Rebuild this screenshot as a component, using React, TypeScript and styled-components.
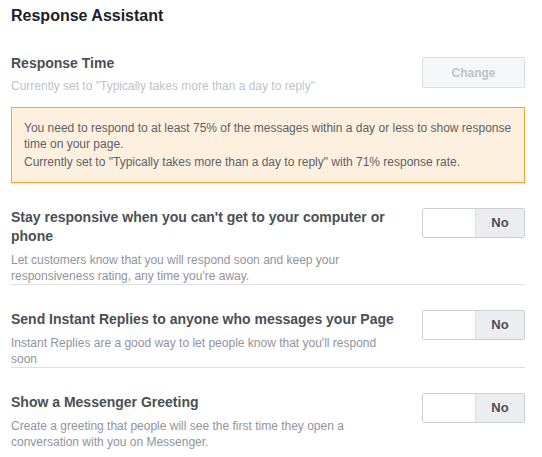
import React, {useState} from 'react';
import styled, {createGlobalStyle} from 'styled-components';

const GlobalStyle = createGlobalStyle`
  html, body {
    margin: 0;
    padding: 0;
    background: #fff;
    font-family: "Liberation Sans", Arial, Helvetica, sans-serif;
    -webkit-font-smoothing: antialiased;
  }
`;

type SettingRowProps = {
  title: string;
  description: string;
  last?: boolean;
};

const settings: SettingRowProps[] = [
  {
    title: "Stay responsive when you can't get to your computer or phone",
    description:
      "Let customers know that you will respond soon and keep your responsiveness rating, any time you're away.",
  },
  {
    title: 'Send Instant Replies to anyone who messages your Page',
    description: "Instant Replies are a good way to let people know that you'll respond soon",
  },
  {
    title: 'Show a Messenger Greeting',
    description:
      'Create a greeting that people will see the first time they open a conversation with you on Messenger.',
    last: true,
  },
];

function SettingRow({title, description, last}: SettingRowProps) {
  const [enabled, setEnabled] = useState(false);

  return (
    <Row $last={last}>
      <TextColumn>
        <RowTitle>{title}</RowTitle>
        <RowDescription>{description}</RowDescription>
      </TextColumn>
      <Toggle type="button" onClick={() => setEnabled(!enabled)}>
        <ToggleKnob $on={enabled}>{enabled ? 'Yes' : ''}</ToggleKnob>
        <ToggleLabel $on={enabled}>{enabled ? '' : 'No'}</ToggleLabel>
      </Toggle>
    </Row>
  );
}

export default function App() {
  return (
    <>
      <GlobalStyle />
      <Page>
        <Header>Response Assistant</Header>
        <ResponseTimeRow>
          <div>
            <SectionTitle>Response Time</SectionTitle>
            <Subtitle>Currently set to "Typically takes more than a day to reply"</Subtitle>
          </div>
          <ChangeButton type="button" disabled>
            Change
          </ChangeButton>
        </ResponseTimeRow>
        <Notice>
          <NoticeText>
            You need to respond to at least 75% of the messages within a day or less to show
            response time on your page.
          </NoticeText>
          <NoticeText>
            Currently set to "Typically takes more than a day to reply" with 71% response rate.
          </NoticeText>
        </Notice>
        {settings.map((s) => (
          <SettingRow key={s.title} {...s} />
        ))}
      </Page>
    </>
  );
}

const Page = styled.div`
  width: 542px;
  box-sizing: border-box;
  padding: 6px 17px 0 11px;
`;

const Header = styled.div`
  font-size: 16px;
  line-height: 20px;
  font-weight: bold;
  color: #1d2129;
`;

const ResponseTimeRow = styled.div`
  display: flex;
  justify-content: space-between;
  align-items: flex-start;
  margin-top: 28px;
`;

const SectionTitle = styled.div`
  font-size: 14px;
  line-height: 18px;
  font-weight: bold;
  color: #4b4f56;
`;

const Subtitle = styled.div`
  margin-top: 6px;
  font-size: 12px;
  line-height: 16px;
  color: #bec3c9;
`;

const ChangeButton = styled.button`
  margin-top: 3px;
  width: 103px;
  height: 31px;
  box-sizing: border-box;
  border: 1px solid #dddfe2;
  border-radius: 2px;
  background: #f5f6f7;
  color: #bec3c9;
  font-family: inherit;
  font-size: 12px;
  font-weight: bold;
  padding: 0;
`;

const Notice = styled.div`
  margin-top: 13px;
  padding: 12px 12px;
  border: 1px solid #f7a431;
  background: #fef0de;
  box-shadow: 0 1px 1px rgba(0, 0, 0, 0.08);
`;

const NoticeText = styled.p`
  margin: 0;
  font-size: 12px;
  line-height: 16px;
  color: #5d6168;

  & + & {
    margin-top: 2px;
  }
`;

const Row = styled.div<{$last?: boolean}>`
  display: flex;
  justify-content: space-between;
  align-items: flex-start;
  padding-top: 25px;
  border-bottom: ${({$last}) => ($last ? 'none' : '1px solid #dddfe2')};

  &:first-of-type {
    margin-top: 0;
  }
`;

const TextColumn = styled.div`
  width: 385px;
`;

const RowTitle = styled.div`
  font-size: 14px;
  line-height: 19px;
  font-weight: bold;
  color: #4b4f56;
`;

const RowDescription = styled.div`
  margin-top: 6px;
  font-size: 12px;
  line-height: 16px;
  color: #90949c;
`;

const Toggle = styled.button`
  display: flex;
  width: 103px;
  height: 30px;
  box-sizing: border-box;
  padding: 0;
  border: 1px solid #ccd0d5;
  border-radius: 2px;
  background: #fff;
  overflow: hidden;
  cursor: pointer;
  font-family: inherit;
`;

const ToggleKnob = styled.span<{$on: boolean}>`
  width: 52px;
  height: 100%;
  background: ${({$on}) => ($on ? '#4267b2' : '#fff')};
  color: #fff;
  font-size: 13px;
  font-weight: bold;
  line-height: 28px;
`;

const ToggleLabel = styled.span<{$on: boolean}>`
  flex: 1;
  height: 100%;
  border-left: 1px solid #dddfe2;
  background: ${({$on}) => ($on ? '#fff' : '#ebedf0')};
  color: #4b4f56;
  font-size: 13px;
  font-weight: bold;
  line-height: 28px;
  text-align: center;
`;
